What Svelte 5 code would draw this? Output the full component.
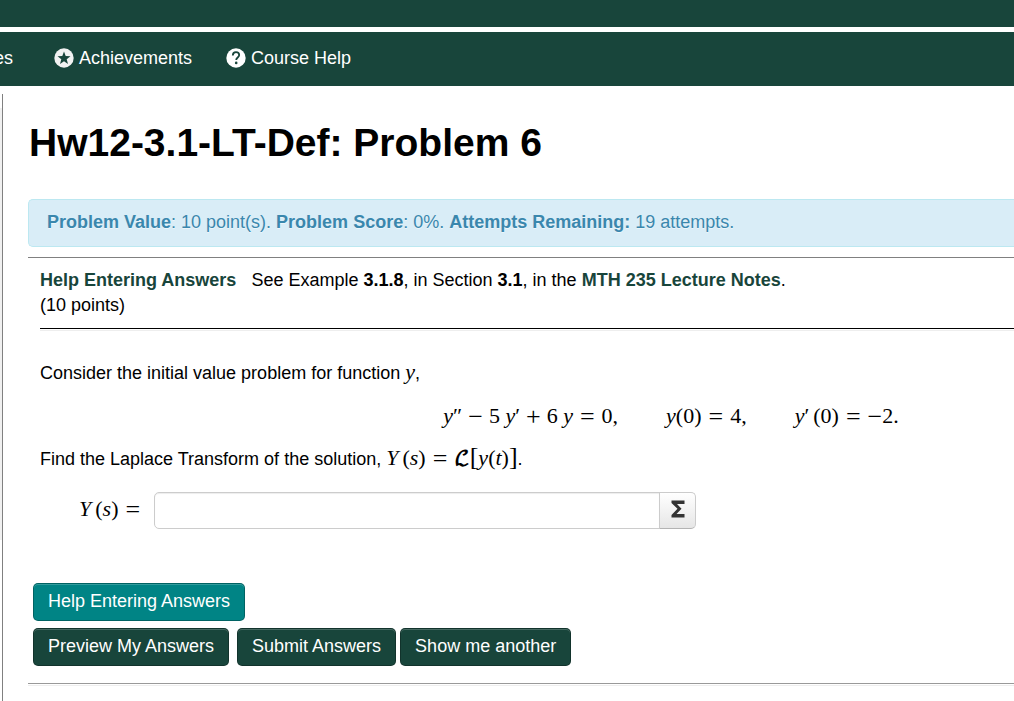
<script lang="ts">
  let answer = $state("");

  const status = [
    { label: "Problem Value", sep: ":", value: "10 point(s)." },
    { label: "Problem Score", sep: ":", value: "0%." },
    { label: "Attempts Remaining:", sep: "", value: "19 attempts." },
  ];
</script>

<div class="page">
  <header>
    <div class="banner"></div>
    <nav class="menu">
      <a class="courses" href="#courses">Courses</a>
      <a class="item" href="#achievements">
        <svg viewBox="0 0 20 20" aria-hidden="true">
          <circle cx="10" cy="10" r="9.7" fill="#f2f2f2" />
          <path d="M10 3.6l1.7 4.5 4.8.2-3.8 3 1.3 4.7-4-2.7L6 16l1.3-4.7-3.8-3 4.8-.2z" fill="#18453b" />
        </svg>
        <span>Achievements</span>
      </a>
      <a class="item" href="#help">
        <svg viewBox="0 0 20 20" aria-hidden="true">
          <circle cx="10" cy="10" r="9.7" fill="#fff" />
          <path d="M6.8 7.6C6.8 5 8.2 4.2 10 4.2s3.2 1 3.2 2.9c0 2.5-3 2.4-3 5" fill="none" stroke="#18453b" stroke-width="1.8" />
          <circle cx="10.2" cy="14.9" r="1.3" fill="#18453b" />
        </svg>
        <span>Course Help</span>
      </a>
    </nav>
  </header>

  <div class="body">
    <div class="rail"><div class="well"></div></div>
    <main>
      <h1>Hw12-3.1-LT-Def: Problem 6</h1>

      <p class="status">
        {#each status as s (s.label)}
          <b>{s.label}</b>{s.sep} {s.value}{" "}
        {/each}
      </p>

      <section class="problem">
        <p>
          <a href="#entering">Help Entering Answers</a> &nbsp; See Example <b>3.1.8</b>, in Section
          <b>3.1</b>, in the <a href="#notes">MTH 235 Lecture Notes</a>.<br />(10 points)
        </p>
        <hr />
        <p>Consider the initial value problem for function <span class="math"><i>y</i></span>,</p>

        <div class="equation math">
          <span><i>y</i>″<span class="op bin">−</span>5 <i>y</i>′<span class="op bin">+</span>6 <i>y</i><span class="op">=</span>0,</span>
          <span><i>y</i>(0)<span class="op">=</span>4,</span>
          <span><i>y</i><span class="prime">′</span>(0)<span class="op">=</span><span class="op neg">−</span>2.</span>
        </div>

        <p class="find">
          Find the Laplace Transform of the solution,
          <span class="math"><i class="cap">Y</i>(<i>s</i>)<span class="op">=</span><span class="script">ℒ</span><span class="bracket">[</span><i>y</i>(<i>t</i>)<span class="bracket">]</span></span>.
        </p>

        <div class="answer">
          <label class="math" for="ans"><i class="cap">Y</i>(<i>s</i>)<span class="op">=</span></label>
          <input id="ans" type="text" bind:value={answer} />
          <button type="button" aria-label="Equation editor">
            <svg viewBox="0 0 14 18" aria-hidden="true">
              <path d="M0.5 0.5H13.5V4H6L10.5 8.7 5.5 14H13.5V17.5H0.5V15L6.5 8.8 0.5 3z" fill="#333" />
            </svg>
          </button>
        </div>
      </section>

      <div class="actions">
        <button class="btn teal" type="button">Help Entering Answers</button>
        <div class="row">
          <button class="btn preview" type="button">Preview My Answers</button>
          <button class="btn" type="button">Submit Answers</button>
          <button class="btn" type="button">Show me another</button>
        </div>
      </div>
      <hr class="end" />
    </main>
  </div>
</div>

<style>
  :global(body) {
    background: #fff;
  }
  .page {
    display: flex;
    flex-direction: column;
    min-height: 100vh;
    overflow: hidden;
    font-family: "Liberation Sans", Arial, sans-serif;
    font-size: 18px;
    line-height: 25px;
    color: #000;
  }
  .banner {
    height: 27px;
    background: #18453b;
  }
  .menu {
    display: flex;
    align-items: center;
    box-sizing: border-box;
    height: 54px;
    margin-top: 5px;
    padding-bottom: 2px;
    background: #18453b;
  }
  .menu a {
    color: #fff;
    text-decoration: none;
  }
  .courses {
    display: flex;
    justify-content: flex-end;
    width: 13px;
    margin-right: 41px;
    overflow: hidden;
  }
  .item {
    display: flex;
    align-items: center;
    gap: 5px;
    margin-right: 34px;
  }
  .item svg {
    width: 20px;
    height: 20px;
  }
  .body {
    display: flex;
    flex: 1;
    margin-top: 8px;
  }
  .rail {
    width: 2px;
    padding-top: 14px;
    border-right: 1px solid #808080;
  }
  .well {
    height: 432px;
    background: #f0f0f0;
  }
  main {
    flex: 1;
    min-width: 0;
    padding-left: 25px;
  }
  h1 {
    margin: 24px 0 0 1px;
    font-size: 39px;
    line-height: 50px;
  }
  p {
    margin: 0;
  }
  .status {
    margin-top: 31px;
    padding: 10px 18px 11px;
    border: 1px solid #bce8f1;
    border-right: 0;
    border-radius: 5px 0 0 5px;
    background: #d9edf7;
    color: #3a87ad;
    text-shadow: 0 1px 0 rgba(255, 255, 255, 0.5);
  }
  .problem {
    margin-top: 10px;
    padding: 10px 0 0 12px;
    border-top: 1px solid #808080;
  }
  .problem a {
    color: #18453b;
    font-weight: 700;
    text-decoration: none;
  }
  hr {
    height: 1px;
    margin: 10px 0 30px;
    border: 0;
    border-top: 1px solid #000;
    border-bottom: 1px solid #eee;
  }
  .math {
    font-family: "Liberation Serif", "Times New Roman", serif;
    font-size: 22px;
    line-height: 0;
    white-space: nowrap;
  }
  .op {
    margin: 0 7px;
    font-size: 26px;
    line-height: 0;
    vertical-align: -2px;
  }
  .bin {
    margin: 0 6px;
  }
  .neg {
    margin: 0;
  }
  .cap,
  .prime {
    margin-right: 4px;
  }
  .equation {
    display: flex;
    justify-content: center;
    gap: 48px;
    padding-left: 288px;
    margin-top: 17px;
    line-height: 25px;
  }
  .find {
    margin-top: 19px;
  }
  .script {
    font-family: "DejaVu Math TeX Gyre", "DejaVu Serif", "DejaVu Sans", serif;
    font-size: 20px;
    font-weight: 700;
  }
  .bracket {
    font-size: 26px;
  }
  .answer {
    display: flex;
    align-items: center;
    margin-top: 20px;
    padding-left: 39px;
  }
  .answer label {
    padding-bottom: 4px;
    line-height: 25px;
  }
  .answer input {
    box-sizing: border-box;
    width: 506px;
    height: 37px;
    margin-left: 7px;
    padding: 4px 7px;
    border: 1px solid #ccc;
    border-radius: 5px 0 0 5px;
    font: inherit;
    box-shadow: inset 0 1px 1px rgba(0, 0, 0, 0.075);
  }
  .answer button {
    display: flex;
    align-items: center;
    justify-content: center;
    width: 37px;
    height: 37px;
    margin-left: -1px;
    padding: 0 0 4px;
    border: 1px solid #ccc;
    border-bottom-color: #b3b3b3;
    border-radius: 0 5px 5px 0;
    background: linear-gradient(#fff, #e6e6e6);
  }
  .answer button svg {
    width: 14px;
    height: 18px;
  }
  .actions {
    display: flex;
    flex-direction: column;
    align-items: flex-start;
    gap: 7px;
    margin: 54px 0 0 5px;
  }
  .row {
    display: flex;
    gap: 4px;
  }
  .btn {
    height: 38px;
    padding: 0 14px 2px;
    border: 1px solid rgba(0, 0, 0, 0.25);
    border-radius: 5px;
    background: #18453b;
    color: #fff;
    font: inherit;
    box-shadow: inset 0 1px 0 rgba(255, 255, 255, 0.2);
    cursor: pointer;
  }
  .preview {
    margin-right: 4px;
  }
  .teal {
    background: #008485;
  }
  .end {
    margin: 17px 0 0;
    border-top-color: #999;
  }
</style>
